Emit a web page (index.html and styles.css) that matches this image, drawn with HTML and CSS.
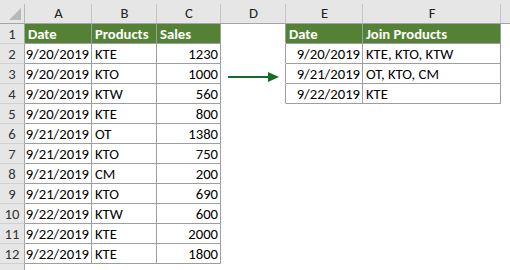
FILE: index.html
```html
<!DOCTYPE html>
<html>
<head>
<meta charset="utf-8">
<link rel="stylesheet" href="styles.css">
</head>
<body>
<div class="sheet">
  <div class="ch corner"><span class="tri"></span></div>
  <div class="ch">A</div><div class="ch">B</div><div class="ch">C</div><div class="ch">D</div><div class="ch">E</div><div class="ch">F</div><div class="ch rest"></div>

  <div class="rh">1</div>
  <div class="c hd b">Date</div><div class="c hd b">Products</div><div class="c hd b">Sales</div>
  <div class="c d edge"></div>
  <div class="c hd b">Date</div><div class="c hd b">Join Products</div><div class="c e"></div>

  <div class="rh">2</div>
  <div class="c b r">9/20/2019</div><div class="c b">KTE</div><div class="c b r">1230</div>
  <div class="c d edge"></div>
  <div class="c b r">9/20/2019</div><div class="c b">KTE, KTO, KTW</div><div class="c e"></div>

  <div class="rh">3</div>
  <div class="c b r">9/20/2019</div><div class="c b">KTO</div><div class="c b r">1000</div>
  <div class="c d edge"></div>
  <div class="c b r">9/21/2019</div><div class="c b">OT, KTO, CM</div><div class="c e"></div>

  <div class="rh">4</div>
  <div class="c b r">9/20/2019</div><div class="c b">KTW</div><div class="c b r">560</div>
  <div class="c d edge"></div>
  <div class="c b r">9/22/2019</div><div class="c b">KTE</div><div class="c e"></div>

  <div class="rh">5</div>
  <div class="c b r">9/20/2019</div><div class="c b">KTE</div><div class="c b r">800</div>
  <div class="c d"></div><div class="c e"></div><div class="c e"></div><div class="c e"></div>

  <div class="rh">6</div>
  <div class="c b r">9/21/2019</div><div class="c b">OT</div><div class="c b r">1380</div>
  <div class="c d"></div><div class="c e"></div><div class="c e"></div><div class="c e"></div>

  <div class="rh">7</div>
  <div class="c b r">9/21/2019</div><div class="c b">KTO</div><div class="c b r">750</div>
  <div class="c d"></div><div class="c e"></div><div class="c e"></div><div class="c e"></div>

  <div class="rh">8</div>
  <div class="c b r">9/21/2019</div><div class="c b">CM</div><div class="c b r">200</div>
  <div class="c d"></div><div class="c e"></div><div class="c e"></div><div class="c e"></div>

  <div class="rh">9</div>
  <div class="c b r">9/21/2019</div><div class="c b">KTO</div><div class="c b r">690</div>
  <div class="c d"></div><div class="c e"></div><div class="c e"></div><div class="c e"></div>

  <div class="rh">10</div>
  <div class="c b r">9/22/2019</div><div class="c b">KTW</div><div class="c b r">600</div>
  <div class="c d"></div><div class="c e"></div><div class="c e"></div><div class="c e"></div>

  <div class="rh">11</div>
  <div class="c b r">9/22/2019</div><div class="c b">KTE</div><div class="c b r">2000</div>
  <div class="c d"></div><div class="c e"></div><div class="c e"></div><div class="c e"></div>

  <div class="rh">12</div>
  <div class="c b r">9/22/2019</div><div class="c b">KTE</div><div class="c b r">1800</div>
  <div class="c d"></div><div class="c e"></div><div class="c e"></div><div class="c e"></div>

  <div class="rh last"></div>
  <div class="c e"></div><div class="c e"></div><div class="c e"></div><div class="c e"></div><div class="c e"></div><div class="c e"></div><div class="c e"></div>

  <svg class="arrow" width="52" height="12" viewBox="0 0 52 12">
    <rect x="0" y="5" width="42" height="2" fill="#1a6a27"/>
    <polygon points="40,1 51,6 40,11" fill="#1a6a27"/>
  </svg>
</div>
</body>
</html>
```
FILE: styles.css
```css
html, body {
  margin: 0;
  padding: 0;
  background: #ffffff;
}

.sheet {
  position: relative;
  display: grid;
  grid-template-columns: 25px 67px 65px 64px 65px 77px 138px 1fr;
  grid-template-rows: 24px repeat(12, 20px) 10px;
  width: 510px;
  height: 270px;
  overflow: hidden;
  font-family: Calibri, Carlito, "Liberation Sans", sans-serif;
  font-size: 14.67px;
  color: #000;
}

.ch {
  box-sizing: border-box;
  background: linear-gradient(#c6c6c6, #c6c6c6) right bottom / 1px 19px no-repeat, #e6e6e6;
  border-bottom: 1px solid #a6a6a6;
  display: flex;
  align-items: center;
  justify-content: center;
  padding-top: 3px;
  color: #222;
  font-size: 14.67px;
}

.corner {
  justify-content: flex-start;
  align-items: flex-start;
  padding: 8px 0 0 9px;
  background: linear-gradient(#b9b9b9, #b9b9b9) right bottom / 1px 19px no-repeat, #e6e6e6;
}

.tri {
  width: 0;
  height: 0;
  border-left: 12px solid transparent;
  border-bottom: 12px solid #b8b8b8;
}

.rest {
  background: #e6e6e6;
}

.rh {
  box-sizing: border-box;
  background: #e6e6e6;
  border-right: 1px solid #a6a6a6;
  border-bottom: 1px solid #d0d0d0;
  display: flex;
  align-items: center;
  justify-content: center;
  color: #333;
  font-size: 14.67px;
  padding-top: 1px;
}

.rh.last {
  border-bottom: none;
}

.c {
  box-sizing: border-box;
  border-right: 1px solid transparent;
  border-bottom: 1px solid transparent;
  display: flex;
  align-items: center;
  padding: 1px 3px 0 3px;
  white-space: nowrap;
  overflow: hidden;
}

.c.b {
  border-right-color: #9e9e9e;
  border-bottom-color: #9e9e9e;
}

.c.d.edge {
  border-right-color: #9e9e9e;
}

.c.r {
  justify-content: flex-end;
  padding-right: 2px;
}

.c.hd {
  background: #548235;
  color: #ffffff;
  font-weight: bold;
}

.arrow {
  position: absolute;
  left: 228px;
  top: 71px;
}
```
